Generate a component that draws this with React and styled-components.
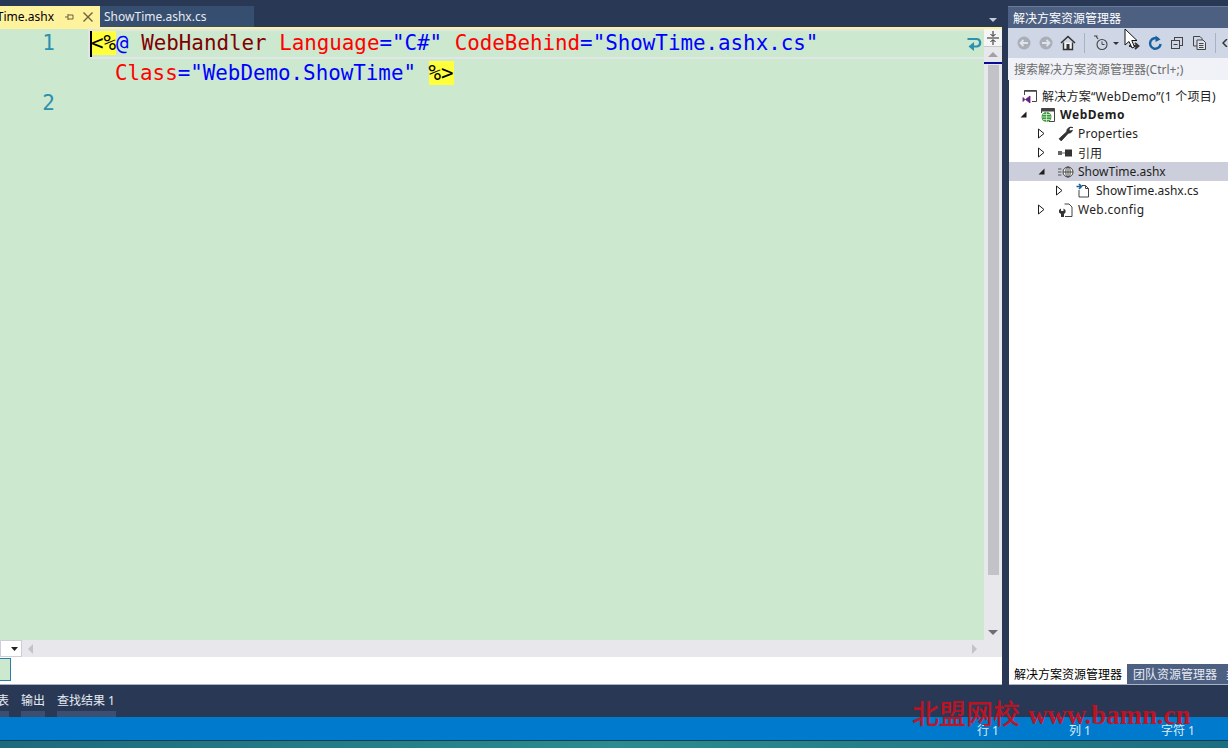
import React from 'react'
import styled, { createGlobalStyle } from 'styled-components'

const Global = createGlobalStyle`
  html, body {
    margin: 0;
    padding: 0;
    background: #293955;
    overflow: hidden;
  }
  * {
    box-sizing: border-box;
  }
`

const UI_FONT = `"Noto Sans", "Noto Sans CJK SC", sans-serif`
const CODE_FONT = `"DejaVu Sans Mono", "Liberation Mono", monospace`

const Page = styled.div`
  position: relative;
  width: 1228px;
  height: 748px;
  display: flex;
  flex-direction: column;
  background: #293955;
  font-family: ${UI_FONT};
  font-size: 12px;
  overflow: hidden;
`

const Main = styled.div`
  display: flex;
  height: 685px;
`

const EditorColumn = styled.div`
  width: 1002px;
  display: flex;
  flex-direction: column;
`

const TabStrip = styled.div`
  height: 27px;
  padding-top: 6px;
  display: flex;
  align-items: stretch;
`

const ActiveTab = styled.div`
  width: 100px;
  background: #fff29d;
  color: #000;
  display: flex;
  align-items: center;
  justify-content: flex-end;
  overflow: hidden;
  white-space: nowrap;
  padding-right: 7px;
`

const TabPin = styled.svg`
  flex: none;
  margin: 0 8px 0 11px;
`

const TabClose = styled.svg`
  flex: none;
`

const OtherTab = styled.div`
  width: 154px;
  background: #364e6f;
  color: #e6ebf2;
  display: flex;
  align-items: center;
  padding-left: 4px;
`

const TabSpacer = styled.div`
  flex: 1;
`

const TabMenu = styled.div`
  width: 18px;
  display: flex;
  align-items: center;
  justify-content: center;
  padding-top: 6px;
`

const EditorBody = styled.div`
  flex: 1;
  display: flex;
  min-height: 0;
`

const CodeArea = styled.div`
  flex: 1;
  background: #cce8cf;
  display: flex;
  border-top: 2px solid #fff29d;
  position: relative;
`

const Gutter = styled.div`
  width: 88px;
  padding-right: 33px;
  text-align: right;
  font-family: ${CODE_FONT};
  font-size: 21px;
  color: #2b91af;
`

const LineNumber = styled.div`
  height: ${({ $lines }) => $lines * 30}px;
  line-height: 28px;
`

const Code = styled.div`
  flex: 1;
  font-family: ${CODE_FONT};
  font-size: 20.84px;
  line-height: 28px;
  white-space: pre;
`

const CurrentLine = styled.div`
  height: 30px;
  padding-left: 1px;
  padding-bottom: 2px;
  border-top: 2px solid #dfe6e5;
  border-bottom: 2px solid #dfe6e5;
  border-left: 2px solid #dfe6e5;
  line-height: 24px;
  display: flex;
  align-items: center;
  position: relative;
`

const CodeLine = styled.div`
  height: 30px;
  padding-left: ${({ $indent }) => $indent}px;
`

const Token = styled.span`
  color: ${({ $c }) => $c};
  background: ${({ $bg }) => $bg || 'transparent'};
`

const Caret = styled.span`
  position: absolute;
  left: 0;
  top: 0;
  width: 2px;
  height: 26px;
  background: #000;
`

const WrapGlyph = styled.svg`
  position: absolute;
  right: 2px;
  top: 8px;
`

const VScroll = styled.div`
  width: 18px;
  background: #e8e8ec;
  display: flex;
  flex-direction: column;
  align-items: center;
  border-top: 2px solid #fff29d;
`

const Splitter = styled.div`
  width: 18px;
  height: 18px;
  background: #f5f5f5;
  border-bottom: 1px solid #c8c9d0;
  display: flex;
  align-items: center;
  justify-content: center;
`

const ScrollArrowBox = styled.div`
  height: 15px;
  display: flex;
  align-items: center;
  justify-content: center;
`

const ScrollMark = styled.div`
  width: 100%;
  height: 2px;
  background: #0a0a9a;
`

const ScrollThumb = styled.div`
  width: 11px;
  height: 510px;
  margin-top: 1px;
  background: #c2c3c9;
`

const ScrollTrack = styled.div`
  flex: 1;
`

const HScrollRow = styled.div`
  height: 17px;
  background: #e8e8ec;
  display: flex;
  align-items: center;
`

const ZoomBox = styled.div`
  width: 22px;
  height: 17px;
  background: #fff;
  border: 1px solid #cccedb;
  display: flex;
  align-items: center;
  justify-content: flex-end;
  padding-right: 3px;
`

const HArrow = styled.div`
  margin-left: ${({ $left }) => $left}px;
  display: flex;
`

const BottomStrip = styled.div`
  height: 28px;
  background: #fff;
  border-bottom: 1px solid #a9b1c2;
  display: flex;
  align-items: center;
`

const PreviewBox = styled.div`
  width: 11px;
  height: 23px;
  margin-bottom: 2px;
  background: #cce8cf;
  border: 1px solid #2a7fa8;
  border-left: none;
`

const PanelGap = styled.div`
  width: 6px;
`

const Explorer = styled.div`
  width: 220px;
  padding-top: 6px;
  display: flex;
  flex-direction: column;
`

const ExplorerTitle = styled.div`
  height: 22px;
  background: #4d6082;
  color: #fff;
  display: flex;
  align-items: center;
  padding-left: 5px;
  border-top: 1px solid #6a7c9c;
`

const Toolbar = styled.div`
  height: 30px;
  background: #cfd6e5;
  display: flex;
  align-items: center;
  padding-left: 5px;
  overflow: hidden;
`

const ToolIcon = styled.div`
  width: ${({ $w }) => $w || 22}px;
  height: 22px;
  flex: none;
  display: flex;
  align-items: center;
  justify-content: center;
`

const ToolSep = styled.div`
  width: 1px;
  height: 20px;
  margin: 0 5px;
  flex: none;
  background: #a9b1c2;
`

const SearchBox = styled.div`
  height: 22px;
  background: #f0f2f7;
  color: #6d6d6d;
  display: flex;
  align-items: center;
  padding-left: 6px;
`

const Tree = styled.div`
  flex: 1;
  background: #fff;
  padding-top: 6px;
  margin-left: 1px;
`

const Row = styled.div`
  height: 19px;
  display: flex;
  align-items: center;
  padding-left: ${({ $pad }) => $pad}px;
  background: ${({ $selected }) => ($selected ? '#cccedb' : 'transparent')};
  color: #1e1e1e;
  font-weight: ${({ $bold }) => ($bold ? 700 : 400)};
  letter-spacing: ${({ $spacing }) => $spacing || 0}px;
  white-space: nowrap;
`

const Expander = styled.div`
  width: 21px;
  flex: none;
  display: flex;
  align-items: center;
`

const RowIcon = styled.div`
  width: 20px;
  flex: none;
  display: flex;
  align-items: center;
`

const PanelTabs = styled.div`
  height: 21px;
  margin-left: 1px;
  display: flex;
  background: #fff;
  border-bottom: 1px solid #a9b1c2;
`

const PanelTab = styled.div`
  display: flex;
  align-items: center;
  padding-left: ${({ $pad }) => $pad}px;
  width: ${({ $w }) => $w}px;
  flex: none;
  white-space: nowrap;
  overflow: hidden;
  color: ${({ $active }) => ($active ? '#000' : '#e6ebf2')};
  background: ${({ $active }) => ($active ? '#fff' : '#4d6082')};
`

const ToolTabs = styled.div`
  height: 32px;
  display: flex;
  color: #e6ebf2;
`

const ToolTab = styled.div`
  width: ${({ $w }) => $w}px;
  margin-left: ${({ $gap }) => $gap}px;
  padding-top: 6px;
  height: 100%;
  display: flex;
  flex-direction: column;
  justify-content: space-between;
  white-space: nowrap;
  overflow: hidden;
  direction: ${({ $clip }) => ($clip ? 'rtl' : 'ltr')};
`

const ToolTabUnderline = styled.div`
  height: 6px;
  background: #3c4f71;
`

const StatusBar = styled.div`
  height: 24px;
  background: #007acc;
  color: #dcecf8;
  border-bottom: 1px solid #0b3d5c;
  display: flex;
  justify-content: flex-end;
  align-items: center;
  padding-top: 2px;
`

const StatusCell = styled.div`
  width: ${({ $w }) => $w}px;
  flex: none;
  white-space: nowrap;
`

const Desktop = styled.div`
  flex: 1;
  background: linear-gradient(90deg, #1b6b7d, #2a8c8e 50%, #1c6f80);
`

const Watermark = styled.div`
  position: absolute;
  left: 912px;
  top: 696px;
  color: #c9101f;
  opacity: 0.92;
  font-family: "Noto Sans CJK SC", "Liberation Serif", serif;
  font-size: 27px;
  font-weight: 500;
  line-height: 34px;
  white-space: nowrap;
  display: flex;
  align-items: baseline;
  gap: 8px;
`

const WatermarkLatin = styled.span`
  font-family: "Liberation Serif", serif;
  font-weight: 700;
  font-size: 26.8px;
`

const Pointer = styled.svg`
  position: absolute;
  left: 1124px;
  top: 28px;
`

const Tri = ({ color = '#1e1e1e', open }) => {
  if (open) return <svg width="9" height="9"><path d="M7.5 1.5 V7.5 H1.5 Z" fill={color} /></svg>
  return <svg width="9" height="11"><path d="M1.5 1 L7 5.5 L1.5 10 Z" fill="#fff" stroke={color} /></svg>
}

const Down = ({ c = '#555', w = 9, h = 5 }) => (
  <svg width={w} height={h}><path d={`M0 0 H${w} L${w / 2} ${h} Z`} fill={c} /></svg>
)

const Round = ({ flip }) => (
  <svg width="14" height="14" viewBox="0 0 14 14">
    <circle cx="7" cy="7" r="6.5" fill="#a9aeb8" />
    <path d={flip ? 'M3 7 H10 M7.5 4 L10.5 7 L7.5 10' : 'M11 7 H4 M6.5 4 L3.5 7 L6.5 10'} stroke="#dfe3ec" strokeWidth="1.8" fill="none" />
  </svg>
)

const HomeIcon = () => (
  <svg width="16" height="16" viewBox="0 0 16 16">
    <path d="M1 8 L8 1.5 L15 8" fill="none" stroke="#333" strokeWidth="1.6" />
    <path d="M3.5 7.5 V14.5 H12.5 V7.5" fill="#f3f3f3" stroke="#333" strokeWidth="1.4" />
    <rect x="6.5" y="9" width="3" height="5.5" fill="#333" />
  </svg>
)

const ClockIcon = () => (
  <svg width="16" height="16" viewBox="0 0 16 16">
    <path d="M1 1 H4.5 M3 1 L5 4" stroke="#444" strokeWidth="1.2" fill="none" />
    <circle cx="9" cy="9.5" r="5" fill="none" stroke="#444" strokeWidth="1.1" />
    <path d="M9 6.5 V9.5 H11.5" stroke="#444" fill="none" />
  </svg>
)

const SyncIcon = () => (
  <svg width="18" height="16" viewBox="0 0 18 16">
    <path d="M3 4 H11 M8 1.5 L11 4 L8 6.5" stroke="#444" strokeWidth="1.4" fill="none" />
    <path d="M6 11 H15 M12 8 L15.5 11 L12 14" stroke="#333" strokeWidth="1.8" fill="none" />
  </svg>
)

const RefreshIcon = () => (
  <svg width="15" height="16" viewBox="0 0 15 16">
    <path d="M10.5 4.2 A5.3 5.3 0 1 0 12.6 9" fill="none" stroke="#14629f" strokeWidth="2.4" />
    <path d="M7.5 0.5 L12.5 4.5 L7.5 7 Z" fill="#14629f" />
  </svg>
)

const CollapseIcon = () => (
  <svg width="14" height="14" viewBox="0 0 14 14">
    <rect x="4.5" y="1.5" width="8" height="8" fill="none" stroke="#444" />
    <rect x="1.5" y="4.5" width="8" height="8" fill="#cfd6e5" stroke="#444" />
    <path d="M3.5 8.5 H7.5" stroke="#444" />
  </svg>
)

const CopyIcon = () => (
  <svg width="15" height="16" viewBox="0 0 15 16">
    <path d="M1.5 1.5 H8 L10 3.5 V11 H1.5 Z" fill="#cfd6e5" stroke="#444" />
    <path d="M5 5 H11 L13.5 7.5 V14.5 H5 Z" fill="#dde2ec" stroke="#444" />
    <path d="M7 8.5 H11.5 M7 10.5 H11.5 M7 12.5 H11.5" stroke="#444" />
  </svg>
)

const SolutionIcon = () => (
  <svg width="16" height="16" viewBox="0 0 16 16">
    <path d="M2.5 7 V2.5 H14.5 V13.5 H10" fill="none" stroke="#444" />
    <path d="M2.5 3 H14.5" stroke="#444" strokeWidth="1.5" />
    <path d="M1 9.5 L3 11.5 L1 13.5 Z M3.5 11.5 L8 8 V15 Z" fill="#68217a" stroke="#68217a" strokeWidth="0.8" />
  </svg>
)

const ProjectIcon = () => (
  <svg width="16" height="16" viewBox="0 0 16 16">
    <path d="M9 14.5 H14.5 V1.5 H1.5 V6" fill="none" stroke="#444" />
    <rect x="1.5" y="1.5" width="13" height="3" fill="#444" />
    <circle cx="6.5" cy="10" r="5" fill="#3c9a3c" />
    <path d="M1.5 10 H11.5 M6.5 5 V15 M3 7.5 H10 M3 12.5 H10" stroke="#d9f0d9" strokeWidth="0.8" />
  </svg>
)

const WrenchIcon = () => (
  <svg width="16" height="16" viewBox="0 0 15 15">
    <path d="M14 1.5 A4 4 0 0 0 8.2 5.4 L1 12 L3 14 L9.6 6.8 A4 4 0 0 0 13.6 4 L11.4 4.6 L10.4 3.6 L11 1.4 Z" fill="#333" stroke="#333" strokeWidth="0.8" />
  </svg>
)

const RefsIcon = () => (
  <svg width="14" height="8" viewBox="0 0 14 8">
    <rect x="0" y="2" width="4" height="4" fill="#666" />
    <path d="M4 4 H7" stroke="#666" />
    <rect x="7" y="0.5" width="7" height="7" fill="#333" />
  </svg>
)

const HandlerIcon = () => (
  <svg width="16" height="12" viewBox="0 0 16 12">
    <path d="M0 3 H3.5 M0 6 H3.5 M0 9 H3.5" stroke="#555" />
    <circle cx="10" cy="6" r="5" fill="#fff" stroke="#444" />
    <path d="M5 6 H15 M10 1 V11" stroke="#444" />
    <ellipse cx="10" cy="6" rx="2.2" ry="5" fill="none" stroke="#444" />
  </svg>
)

const CodeFileIcon = () => (
  <svg width="15" height="15" viewBox="0 0 15 15">
    <path d="M6 2.5 H9.5 L12.5 5.5 V14 H3 V7" fill="#fff" stroke="#444" />
    <path d="M9.5 2.5 V5.5 H12.5" fill="none" stroke="#444" />
    <path d="M0.5 3.5 H5 M3 1 L5.5 3.5 L3 6" stroke="#14629f" strokeWidth="1.6" fill="none" />
  </svg>
)

const ConfigIcon = () => (
  <svg width="16" height="16" viewBox="0 0 16 16">
    <path d="M6.5 2 H11 L14 5 V14.5 H7" fill="#fff" stroke="#444" />
    <path d="M1 8 L3 6.5 V9 H5.5 V6.5 L7.5 8 V10.5 L6 12 V15 H3 V12 L1 10.5 Z" fill="#333" />
  </svg>
)

const TreeRow = ({ pad, arrow, icon, label, bold, selected, spacing }) => (
  <Row $pad={pad} $bold={bold} $selected={selected} $spacing={spacing}>
    {arrow && <Expander>{arrow === 'open' ? <Tri open /> : <Tri />}</Expander>}
    <RowIcon>{icon}</RowIcon>
    {label}
  </Row>
)

export default function App() {
  return (
    <Page>
      <Global />
      <Main>
        <EditorColumn>
          <TabStrip>
            <ActiveTab>
              <span>ShowTime.ashx</span>
              <TabPin width="10" height="10" viewBox="0 0 10 10">
                <path d="M0 5 H3 M3 2 V8 M3 3 H8 V7 H3" fill="none" stroke="#6b623a" />
              </TabPin>
              <TabClose width="10" height="10" viewBox="0 0 10 10">
                <path d="M0.5 0.5 L9.5 9.5 M9.5 0.5 L0.5 9.5" stroke="#6b623a" strokeWidth="1.4" />
              </TabClose>
            </ActiveTab>
            <OtherTab>ShowTime.ashx.cs</OtherTab>
            <TabSpacer />
            <TabMenu>
              <Down c="#c4ccda" w={8} h={4} />
            </TabMenu>
          </TabStrip>
          <EditorBody>
            <CodeArea>
              <Gutter>
                <LineNumber $lines={2}>1</LineNumber>
                <LineNumber $lines={1}>2</LineNumber>
              </Gutter>
              <Code>
                <CurrentLine>
                  <Caret />
                  <span>
                    <Token $c="#000" $bg="#ffff3c">&lt;%</Token>
                    <Token $c="#0000ff">@ </Token>
                    <Token $c="#800000">WebHandler </Token>
                    <Token $c="#ff0000">Language</Token>
                    <Token $c="#0000ff">="C#" </Token>
                    <Token $c="#ff0000">CodeBehind</Token>
                    <Token $c="#0000ff">="ShowTime.ashx.cs"</Token>
                  </span>
                </CurrentLine>
                <CodeLine $indent={27}>
                  <Token $c="#ff0000">Class</Token>
                  <Token $c="#0000ff">="WebDemo.ShowTime" </Token>
                  <Token $c="#000" $bg="#ffff3c">%&gt;</Token>
                </CodeLine>
              </Code>
              <WrapGlyph width="15" height="14" viewBox="0 0 15 14">
                <path d="M0.5 2 H10 A3.8 3.8 0 0 1 10 9.5 H6" fill="none" stroke="#2b91af" strokeWidth="2.2" />
                <path d="M7 5 L1.5 9.5 L7 14 Z" fill="#2b91af" />
              </WrapGlyph>
            </CodeArea>
            <VScroll>
              <Splitter>
                <svg width="12" height="14" viewBox="0 0 12 14">
                  <path d="M0 7 H12" stroke="#222" />
                  <path d="M6 0 V5 M3.5 3 L6 5.5 L8.5 3 M6 14 V9 M3.5 11 L6 8.5 L8.5 11" stroke="#222" fill="none" />
                </svg>
              </Splitter>
              <ScrollArrowBox>
                <svg width="10" height="5"><path d="M0 5 H10 L5 0 Z" fill="#a0a1a8" /></svg>
              </ScrollArrowBox>
              <ScrollMark />
              <ScrollThumb />
              <ScrollTrack />
              <ScrollArrowBox>
                <Down c="#6d6e75" w={10} h={5} />
              </ScrollArrowBox>
            </VScroll>
          </EditorBody>
          <HScrollRow>
            <ZoomBox>
              <Down c="#222" w={7} h={4} />
            </ZoomBox>
            <HArrow $left={6}>
              <svg width="5" height="10"><path d="M5 0 V10 L0 5 Z" fill="#c2c3c9" /></svg>
            </HArrow>
            <HArrow $left={939}>
              <svg width="5" height="10"><path d="M0 0 V10 L5 5 Z" fill="#c2c3c9" /></svg>
            </HArrow>
          </HScrollRow>
          <BottomStrip>
            <PreviewBox />
          </BottomStrip>
        </EditorColumn>
        <PanelGap />
        <Explorer>
          <ExplorerTitle>解决方案资源管理器</ExplorerTitle>
          <Toolbar>
            <ToolIcon><Round /></ToolIcon>
            <ToolIcon><Round flip /></ToolIcon>
            <ToolIcon><HomeIcon /></ToolIcon>
            <ToolSep />
            <ToolIcon><ClockIcon /></ToolIcon>
            <ToolIcon $w={8}><Down c="#333" w={6} h={3} /></ToolIcon>
            <ToolIcon $w={24}><SyncIcon /></ToolIcon>
            <ToolIcon><RefreshIcon /></ToolIcon>
            <ToolIcon><CollapseIcon /></ToolIcon>
            <ToolIcon><CopyIcon /></ToolIcon>
            <ToolSep />
            <ToolIcon $w={8}>
              <svg width="6" height="8"><path d="M5 0 L1 4 L5 8" fill="none" stroke="#333" strokeWidth="1.5" /></svg>
            </ToolIcon>
          </Toolbar>
          <SearchBox>搜索解决方案资源管理器(Ctrl+;)</SearchBox>
          <Tree>
            <TreeRow pad={13} icon={<SolutionIcon />} label="解决方案“WebDemo”(1 个项目)" spacing={0.25} />
            <TreeRow pad={10} arrow="open" icon={<ProjectIcon />} label="WebDemo" bold spacing={0.55} />
            <TreeRow pad={28} arrow="closed" icon={<WrenchIcon />} label="Properties" spacing={0.2} />
            <TreeRow pad={28} arrow="closed" icon={<RefsIcon />} label="引用" />
            <TreeRow pad={28} arrow="open" icon={<HandlerIcon />} label="ShowTime.ashx" selected />
            <TreeRow pad={46} arrow="closed" icon={<CodeFileIcon />} label="ShowTime.ashx.cs" />
            <TreeRow pad={28} arrow="closed" icon={<ConfigIcon />} label="Web.config" spacing={0.3} />
          </Tree>
          <PanelTabs>
            <PanelTab $active $w={118} $pad={5}>解决方案资源管理器</PanelTab>
            <PanelTab $w={95} $pad={6}>团队资源管理器</PanelTab>
            <PanelTab $w={6} $pad={4}>类视图</PanelTab>
          </PanelTabs>
        </Explorer>
      </Main>
      <ToolTabs>
        <ToolTab $w={9} $gap={0} $clip>
          <span>错误列表</span>
          <ToolTabUnderline />
        </ToolTab>
        <ToolTab $w={24} $gap={12}>
          <span>输出</span>
          <ToolTabUnderline />
        </ToolTab>
        <ToolTab $w={59} $gap={12}>
          <span>查找结果 1</span>
          <ToolTabUnderline />
        </ToolTab>
      </ToolTabs>
      <StatusBar>
        <StatusCell $w={92}>行 1</StatusCell>
        <StatusCell $w={92}>列 1</StatusCell>
        <StatusCell $w={67}>字符 1</StatusCell>
      </StatusBar>
      <Desktop />
      <Watermark>
        <span>北盟网校</span>
        <WatermarkLatin>www.bamn.cn</WatermarkLatin>
      </Watermark>
      <Pointer width="16" height="22" viewBox="0 0 16 22">
        <path d="M1 1 V17 L5 13.5 L8 20 L10.5 19 L7.8 12.5 L13 12.5 Z" fill="#fff" stroke="#111" />
      </Pointer>
    </Page>
  )
}
